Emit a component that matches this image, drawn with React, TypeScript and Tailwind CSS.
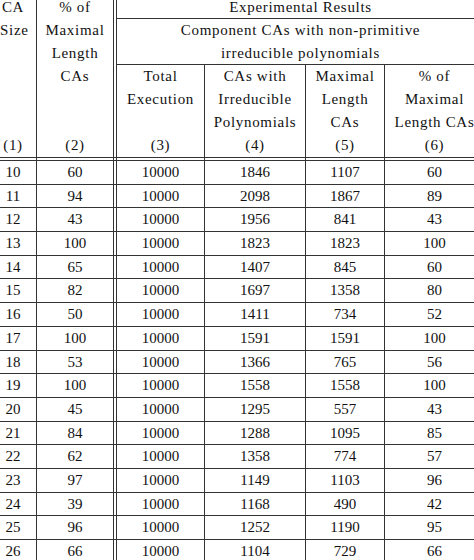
const rows: [number, number, number, number, number, number][] = [
  [10, 60, 10000, 1846, 1107, 60],
  [11, 94, 10000, 2098, 1867, 89],
  [12, 43, 10000, 1956, 841, 43],
  [13, 100, 10000, 1823, 1823, 100],
  [14, 65, 10000, 1407, 845, 60],
  [15, 82, 10000, 1697, 1358, 80],
  [16, 50, 10000, 1411, 734, 52],
  [17, 100, 10000, 1591, 1591, 100],
  [18, 53, 10000, 1366, 765, 56],
  [19, 100, 10000, 1558, 1558, 100],
  [20, 45, 10000, 1295, 557, 43],
  [21, 84, 10000, 1288, 1095, 85],
  [22, 62, 10000, 1358, 774, 57],
  [23, 97, 10000, 1149, 1103, 96],
  [24, 39, 10000, 1168, 490, 42],
  [25, 96, 10000, 1252, 1190, 95],
  [26, 66, 10000, 1104, 729, 66],
];

// each header column is a stack of 23px text lines
function Lines({ items }: { items: string[] }) {
  return (
    <>
      {items.map((t, i) => (
        <div key={i} className="h-[23px] leading-[23px] whitespace-nowrap">
          {t || '\u00a0'}
        </div>
      ))}
    </>
  );
}

function Row({ cells, className }: { cells: (string | number)[]; className: string }) {
  return (
    <div className={`flex border-[#333] ${className}`}>
      <div className="w-[37px] border-r border-[#333] text-center pr-[10px]">{cells[0]}</div>
      <div className="w-[77px] border-r border-[#333] text-center">{cells[1]}</div>
      <div className="w-[2px]" />
      <div className="w-[89px] border-x border-[#333] text-center">{cells[2]}</div>
      <div className="w-[101px] border-r border-[#333] text-center">{cells[3]}</div>
      <div className="w-[79px] border-r border-[#333] text-center">{cells[4]}</div>
      <div className="w-[99px] shrink-0 text-center">{cells[5]}</div>
    </div>
  );
}

export default function App() {
  return (
    <div
      className="w-[474px] h-[560px] overflow-hidden bg-white text-[#111] text-[15px]"
      style={{ fontFamily: '"Liberation Serif", "Times New Roman", serif' }}
    >
      <div className="w-[484px] -mt-[4px]">
        {/* header */}
        <div className="flex tracking-[0.7px]">
          <div className="w-[37px] border-r border-[#333] text-center pr-[10px]">
            <Lines items={['CA', 'Size', '', '', '', '', '(1)']} />
          </div>
          <div className="w-[77px] border-r border-[#333] text-center">
            <Lines items={['% of', 'Maximal', 'Length', 'CAs', '', '', '(2)']} />
          </div>
          <div className="w-[2px]" />
          <div className="flex-1 border-l border-[#333] flex flex-col">
            <div className="h-[23px] leading-[22px] border-b border-[#333] text-center">
              Experimental Results
            </div>
            <div className="h-[46px] border-b border-[#333] text-center">
              <Lines items={['Component CAs with non-primitive', 'irreducible polynomials']} />
            </div>
            <div className="flex">
              <div className="w-[88px] border-r border-[#333] text-center">
                <Lines items={['Total', 'Execution', '', '(3)']} />
              </div>
              <div className="w-[101px] border-r border-[#333] text-center">
                <Lines items={['CAs with', 'Irreducible', 'Polynomials', '(4)']} />
              </div>
              <div className="w-[79px] border-r border-[#333] text-center">
                <Lines items={['Maximal', 'Length', 'CAs', '(5)']} />
              </div>
              <div className="w-[99px] text-center">
                <Lines items={['% of', 'Maximal', 'Length CAs', '(6)']} />
              </div>
            </div>
          </div>
        </div>

        {/* double rule */}
        <Row cells={['', '', '', '', '', '']} className="h-[4px] border-y" />

        {rows.map((r) => (
          <Row key={r[0]} cells={r} className="h-[23.7px] leading-[23px] border-b" />
        ))}
      </div>
    </div>
  );
}
